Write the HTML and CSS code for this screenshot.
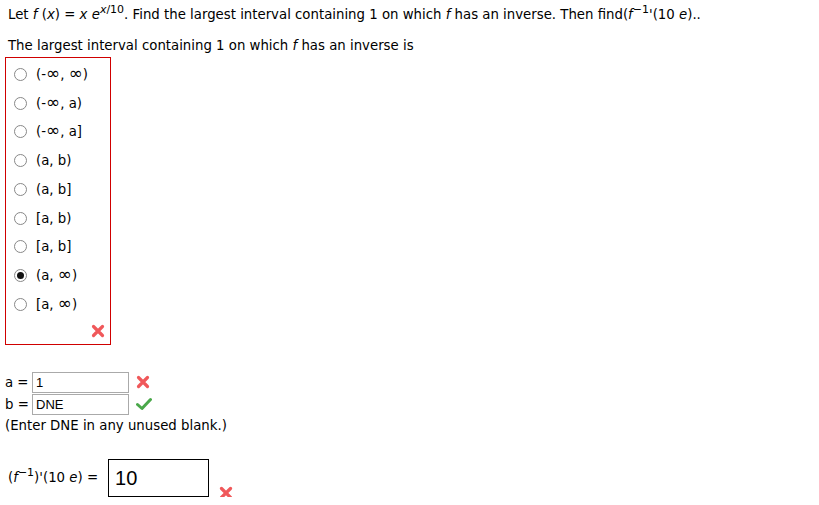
FILE: index.html
```html
<!DOCTYPE html>
<html>
<head>
<meta charset="utf-8">
<link rel="stylesheet" href="styles.css">
</head>
<body>
<div class="page">
  <p class="line1">Let <i>f</i> (<i>x</i>) = <i>x</i> <i>e</i><sup><i>x</i>/10</sup>. Find the largest interval containing 1 on which <i>f</i> has an inverse. Then find(<i>f</i><sup class="inv">−1</sup>'(10 <i>e</i>)..</p>
  <p class="line2">The largest interval containing 1 on which <i>f</i> has an inverse is</p>
  <div class="choices">
    <label class="opt"><span class="radio"></span><span>(-<span class="inf">∞</span>, <span class="inf">∞</span>)</span></label>
    <label class="opt"><span class="radio"></span><span>(-<span class="inf">∞</span>, a)</span></label>
    <label class="opt"><span class="radio"></span><span>(-<span class="inf">∞</span>, a]</span></label>
    <label class="opt"><span class="radio"></span><span>(a, b)</span></label>
    <label class="opt"><span class="radio"></span><span>(a, b]</span></label>
    <label class="opt"><span class="radio"></span><span>[a, b)</span></label>
    <label class="opt"><span class="radio"></span><span>[a, b]</span></label>
    <label class="opt"><span class="radio checked"></span><span>(a, <span class="inf">∞</span>)</span></label>
    <label class="opt"><span class="radio"></span><span>[a, <span class="inf">∞</span>)</span></label>
    <div class="mark-row">
      <svg class="icon" width="14" height="14" viewBox="0 0 14 14"><path d="M2.5 2.5 L11.5 11.5 M11.5 2.5 L2.5 11.5" stroke="#f0585a" stroke-width="3.2" stroke-linecap="round"/></svg>
    </div>
  </div>
  <div class="blanks">
    <div class="brow"><span class="lbl">a =</span><span class="field">1</span>
      <svg class="icon" width="14" height="14" viewBox="0 0 14 14"><path d="M2.5 2.5 L11.5 11.5 M11.5 2.5 L2.5 11.5" stroke="#f0585a" stroke-width="3.2" stroke-linecap="round"/></svg></div>
    <div class="brow"><span class="lbl">b =</span><span class="field">DNE</span>
      <svg class="icon" width="16" height="14" viewBox="0 0 16 14"><path d="M1.5 7.5 L6 11.5 L14.5 2.5" fill="none" stroke="#4aa84a" stroke-width="3" stroke-linecap="round" stroke-linejoin="round"/></svg></div>
    <p class="note">(Enter DNE in any unused blank.)</p>
  </div>
  <div class="final">
    <span class="expr">(<i>f</i><sup class="inv">−1</sup>)'(10 <i>e</i>) =</span>
    <span class="bigfield">10</span>
    <svg class="icon low" width="14" height="14" viewBox="0 0 14 14"><path d="M2.5 2.5 L11.5 11.5 M11.5 2.5 L2.5 11.5" stroke="#f0585a" stroke-width="3.2" stroke-linecap="round"/></svg>
  </div>
</div>
</body>
</html>
```
FILE: styles.css
```css
html, body {
  margin: 0;
  padding: 0;
  background: #fff;
}
body {
  font-family: "DejaVu Sans", Verdana, sans-serif;
  font-size: 13.3px;
  color: #000;
}
.page {
  padding: 0 0 0 8px;
}
p { margin: 0; }
.line1 {
  padding-top: 6px;
  line-height: 18px;
}
sup {
  font-size: 11px;
  line-height: 0;
  vertical-align: 6px;
}
.line2 {
  margin-top: 13px;
  line-height: 18px;
}
.choices {
  margin-left: -3px;
  margin-top: 2px;
  width: 104px;
  border: 1px solid #d00000;
  padding-top: 2px;
  display: flex;
  flex-direction: column;
}
.opt {
  height: 28.75px;
  display: flex;
  align-items: center;
  gap: 9px;
  padding-left: 8px;
}
.inf {
  font-size: 17px;
  line-height: 10px;
}
.radio {
  width: 11px;
  height: 11px;
  border: 1px solid #888;
  border-radius: 50%;
  background: #fff;
  display: flex;
  align-items: center;
  justify-content: center;
  box-sizing: content-box;
}
.radio.checked::after {
  content: "";
  width: 7px;
  height: 7px;
  border-radius: 50%;
  background: #111;
}
.mark-row {
  display: flex;
  justify-content: flex-end;
  padding: 5px 5px 6px 0;
}
.icon { display: block; }
.blanks {
  margin-left: -3px;
  margin-top: 27px;
  display: flex;
  flex-direction: column;
  gap: 1px;
}
.brow {
  display: flex;
  align-items: center;
  height: 21px;
}
.lbl {
  width: 27px;
}
.field {
  box-sizing: border-box;
  width: 97px;
  height: 21px;
  border: 1px solid #aaa;
  font-family: "Liberation Sans", Arial, sans-serif;
  font-size: 13px;
  line-height: 19px;
  padding-left: 3px;
  margin-right: 7px;
}
.note {
  margin-top: 1px;
  line-height: 18px;
}
.final {
  margin-top: 24px;
  display: flex;
  align-items: center;
}
.expr {
  margin-right: 10px;
}
.bigfield {
  box-sizing: border-box;
  width: 101px;
  height: 38px;
  border: 1px solid #000;
  font-family: "Liberation Sans", Arial, sans-serif;
  font-size: 20px;
  line-height: 36px;
  padding-left: 6px;
  margin-right: 10px;
}
.icon.low {
  align-self: flex-end;
  margin-bottom: -3px;
}
```
